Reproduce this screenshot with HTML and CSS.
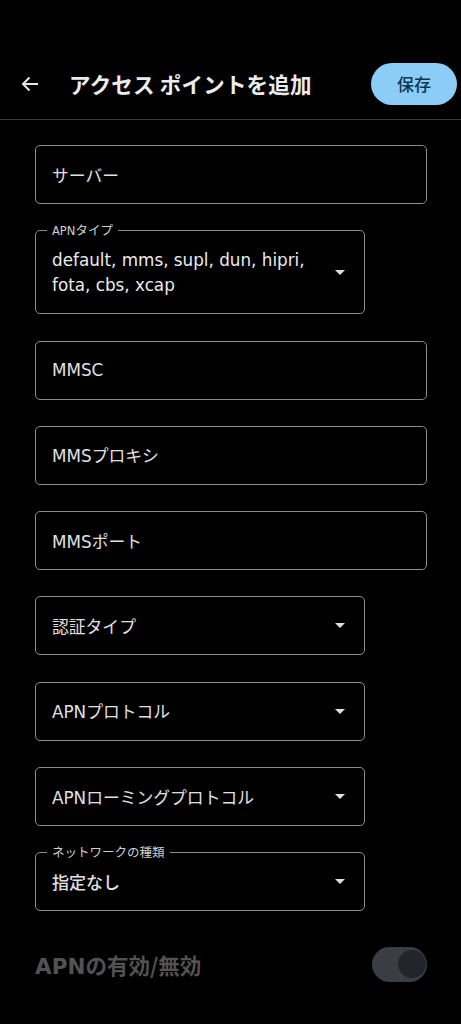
FILE: index.html
```html
<!DOCTYPE html>
<html lang="ja">
<head>
<meta charset="utf-8">
<link rel="stylesheet" href="styles.css">
</head>
<body>
<div class="app">
  <header class="topbar">
    <button class="back" aria-label="戻る">
      <svg width="18" height="16" viewBox="0 0 18 16"><path d="M17 8H2M8.5 1.5L2 8l6.5 6.5" fill="none" stroke="#e6e6e6" stroke-width="2"/></svg>
    </button>
    <h1 class="title">アクセス ポイントを追加</h1>
    <button class="save">保存</button>
  </header>
  <main class="form">
    <div class="field wide"><span class="value">サーバー</span></div>
    <div class="field narrow tall labeled">
      <span class="label"><span class="latin">APN</span>タイプ</span>
      <span class="value multi latin">default, mms, supl, dun, hipri,<br>fota, cbs, xcap</span>
      <span class="caret"></span>
    </div>
    <div class="field wide"><span class="value latin">MMSC</span></div>
    <div class="field wide"><span class="value"><span class="latin">MMS</span>プロキシ</span></div>
    <div class="field wide"><span class="value"><span class="latin">MMS</span>ポート</span></div>
    <div class="field narrow"><span class="value">認証タイプ</span><span class="caret"></span></div>
    <div class="field narrow"><span class="value"><span class="latin">APN</span>プロトコル</span><span class="caret"></span></div>
    <div class="field narrow"><span class="value"><span class="latin">APN</span>ローミングプロトコル</span><span class="caret"></span></div>
    <div class="field narrow labeled">
      <span class="label">ネットワークの種類</span>
      <span class="value strong">指定なし</span>
      <span class="caret"></span>
    </div>
    <div class="toggle-row">
      <span class="toggle-label"><span class="latin">APN</span>の有効/無効</span>
      <span class="switch"><span class="thumb"></span></span>
    </div>
  </main>
</div>
</body>
</html>
```
FILE: styles.css
```css
* { box-sizing: border-box; }
html, body { margin: 0; padding: 0; background: #000; }
body {
  font-family: "Noto Sans CJK JP", "Noto Sans", sans-serif;
  color: #e3e3e3;
  width: 461px;
  height: 1024px;
  overflow: hidden;
}
.latin { font-family: "DejaVu Sans", "Noto Sans CJK JP", sans-serif; }
.topbar {
  height: 120px;
  display: flex;
  align-items: center;
  padding: 48px 4px 0 0;
  border-bottom: 1.5px solid #3b3b3b;
}
.back {
  background: none;
  border: 0;
  padding: 0;
  width: 22px;
  margin-left: 21px;
  display: flex;
  align-items: center;
}
.title {
  margin: 0 0 0 26px;
  font-size: 21.5px;
  font-weight: 700;
  color: #ececec;
  letter-spacing: 0.2px;
  flex: 1;
}
.save {
  width: 86px;
  height: 42px;
  border-radius: 21px;
  border: 0;
  background: #8ccdf8;
  color: #0c3550;
  font-family: "Noto Sans CJK JP", sans-serif;
  font-size: 17px;
  font-weight: 500;
  padding: 0;
}
.form {
  padding: 25px 34px 0 35px;
  display: flex;
  flex-direction: column;
  gap: 26.3px;
}
.field {
  position: relative;
  height: 59px;
  border: 1.5px solid #8c8c8c;
  border-radius: 5px;
  display: flex;
  align-items: center;
  padding: 0 16px;
}
.field.wide { width: 392px; }
.field.narrow { width: 330px; }
.field.tall { height: 84px; }
.value {
  font-size: 16.8px;
  color: #e0e0e0;
  flex: 1;
}
.value.strong { font-size: 17px; font-weight: 500; }
.value.multi { line-height: 25px; color: #ececec; padding-top: 1px; }
.label {
  position: absolute;
  top: -10px;
  left: 11px;
  padding: 0 5px;
  background: #000;
  font-size: 12.5px;
  line-height: 18px;
  color: #cfcfcf;
}
.label .latin { font-size: 11.5px; }
.caret {
  width: 0;
  height: 0;
  border-left: 5px solid transparent;
  border-right: 5px solid transparent;
  border-top: 5px solid #e0e0e0;
  margin-right: 3px;
}
.toggle-row {
  display: flex;
  align-items: center;
  justify-content: space-between;
  width: 392px;
  margin-top: 9px;
}
.toggle-label {
  font-size: 21.5px;
  font-weight: 700;
  color: #525252;
}
.switch {
  width: 55px;
  height: 35px;
  border-radius: 18px;
  background: #3a3d44;
  display: flex;
  align-items: center;
  justify-content: flex-end;
  padding-right: 1px;
}
.thumb {
  width: 28px;
  height: 28px;
  border-radius: 50%;
  background: #22252c;
}
```
